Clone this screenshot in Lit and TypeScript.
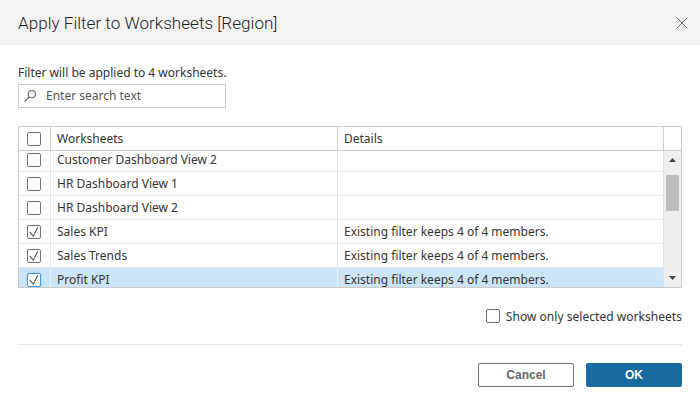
import { LitElement, html, css, svg } from "lit";
import { customElement } from "lit/decorators.js";

const rows = [
  { name: "Customer Dashboard View 2", details: "", checked: false, selected: false },
  { name: "HR Dashboard View 1", details: "", checked: false, selected: false },
  { name: "HR Dashboard View 2", details: "", checked: false, selected: false },
  { name: "Sales KPI", details: "Existing filter keeps 4 of 4 members.", checked: true, selected: false },
  { name: "Sales Trends", details: "Existing filter keeps 4 of 4 members.", checked: true, selected: false },
  { name: "Profit KPI", details: "Existing filter keeps 4 of 4 members.", checked: true, selected: true },
];

const check = svg`<svg width="12" height="12" viewBox="0 0 12 12"><path d="M1.7 6 L5.2 10.2 L10 1" fill="none" stroke="#666" stroke-width="1.2"/></svg>`;

@customElement("app-root")
export class AppRoot extends LitElement {
  static styles = css`
    :host {
      display: block;
      width: 700px;
      height: 405px;
      background: #fff;
      font-family: "Noto Sans", "Open Sans", sans-serif;
      font-size: 12px;
      color: #333;
      overflow: hidden;
    }
    .head {
      height: 45px;
      background: #f3f3f3;
      display: flex;
      align-items: center;
      justify-content: space-between;
      padding: 0 12px 0 18px;
      font-family: Roboto, sans-serif;
      font-weight: 300;
      font-size: 17.1px;
      color: #222;
    }
    .head svg { display: block; }
    .body { padding: 20px 18px 0; display: flex; flex-direction: column; }
    .note { height: 19px; line-height: 16px; }
    .search {
      width: 208px;
      height: 24px;
      box-sizing: border-box;
      border: 1px solid #ccc;
      display: flex;
      align-items: center;
      gap: 9px;
      padding-left: 5px;
      color: #555;
    }
    .search span { position: relative; top: -1px; }
    .table {
      margin-top: 18px;
      height: 162px;
      box-sizing: border-box;
      border: 1px solid #cbcbcb;
      overflow: hidden;
    }
    .hrow {
      height: 24px;
      box-sizing: border-box;
      display: grid;
      grid-template-columns: 32px 287px 326px 1fr;
      border-bottom: 1px solid #cbcbcb;
    }
    .main { display: grid; grid-template-columns: 1fr 18px; height: 136px; }
    .list { overflow: hidden; }
    .inner { margin-top: -3px; }
    .row {
      height: 24px;
      box-sizing: border-box;
      display: grid;
      grid-template-columns: 32px 287px 1fr;
      border-bottom: 1px solid #e6e6e6;
    }
    .row.sel { background: #cce4f7; }
    .cell {
      display: flex;
      align-items: center;
      padding-left: 6px;
      border-right: 1px solid #e6e6e6;
      white-space: nowrap;
    }
    .row.sel .cell { border-right-color: #e8f2fa; }
    .hrow .cell { border-right: 1px solid #cfcfcf; }
    .hrow .cell:last-child { border-right: 0; }
    .row .cell:last-child { border-right: 0; }
    .cell.c { padding: 0 1px 0 0; justify-content: center; }
    .box {
      width: 12px;
      height: 12px;
      flex: none;
      border: 1px solid #707070;
      border-radius: 2px;
      background: #fff;
      display: flex;
      align-items: center;
      justify-content: center;
    }
    .row.sel .box { border-color: #3f97dc; box-shadow: 0 0 2px #7fbbe9; }
    .scroll {
      background: #efefef;
      border-left: 1px solid #e3e3e3;
      position: relative;
    }
    .thumb {
      position: absolute;
      top: 24px;
      left: 2px;
      width: 13px;
      height: 36px;
      background: #bdbdbd;
    }
    .up, .down { width: 7px; height: 4px; position: absolute; left: 5px; }
    .up { top: 7px; }
    .down { top: 125px; }
    .only {
      display: flex;
      justify-content: flex-end;
      align-items: center;
      gap: 6px;
      margin-top: 20px;
      height: 16px;
      letter-spacing: 0.035px;
    }
    .rule { border-top: 1px solid #e6e6e6; margin-top: 20px; }
    .btns {
      display: flex;
      justify-content: flex-end;
      gap: 12px;
      margin-top: 18px;
    }
    .btn {
      width: 96px;
      height: 24px;
      box-sizing: border-box;
      border-radius: 2px;
      display: flex;
      align-items: center;
      justify-content: center;
      font-family: "Liberation Sans", sans-serif;
      font-weight: 700;
      font-size: 12px;
    }
    .cancel { border: 1px solid #707070; color: #666; background: #fff; }
    .ok { background: #1a6aa2; color: #fff; }
  `;

  render() {
    return html`
      <div class="head">
        <span>Apply Filter to Worksheets [Region]</span>
        <svg width="12" height="12" viewBox="0 0 12 12"><path d="M0.5 0.5 L11.5 11.5 M11.5 0.5 L0.5 11.5" stroke="#666" stroke-width="1" fill="none"/></svg>
      </div>
      <div class="body">
        <div class="note">Filter will be applied to 4 worksheets.</div>
        <div class="search">
          <svg width="13" height="14" viewBox="0 0 13 14"><circle cx="7.8" cy="5.2" r="3.8" fill="none" stroke="#555" stroke-width="1"/><path d="M5 8.2 L0.8 12.6" stroke="#555" stroke-width="1.1"/></svg>
          <span>Enter search text</span>
        </div>
        <div class="table">
          <div class="hrow">
            <div class="cell c"><span class="box"></span></div>
            <div class="cell">Worksheets</div>
            <div class="cell">Details</div>
            <div class="cell"></div>
          </div>
          <div class="main">
            <div class="list"><div class="inner">
              ${rows.map(
                (r) => html`<div class="row ${r.selected ? "sel" : ""}">
                  <div class="cell c"><span class="box">${r.checked ? check : ""}</span></div>
                  <div class="cell">${r.name}</div>
                  <div class="cell">${r.details}</div>
                </div>`
              )}
            </div></div>
            <div class="scroll">
              <svg class="up" viewBox="0 0 7 4"><path d="M3.5 0 L7 4 L0 4 Z" fill="#444"/></svg>
              <div class="thumb"></div>
              <svg class="down" viewBox="0 0 7 4"><path d="M0 0 L7 0 L3.5 4 Z" fill="#444"/></svg>
            </div>
          </div>
        </div>
        <div class="only"><span class="box"></span><span>Show only selected worksheets</span></div>
        <div class="rule"></div>
        <div class="btns">
          <div class="btn cancel">Cancel</div>
          <div class="btn ok">OK</div>
        </div>
      </div>
    `;
  }
}
